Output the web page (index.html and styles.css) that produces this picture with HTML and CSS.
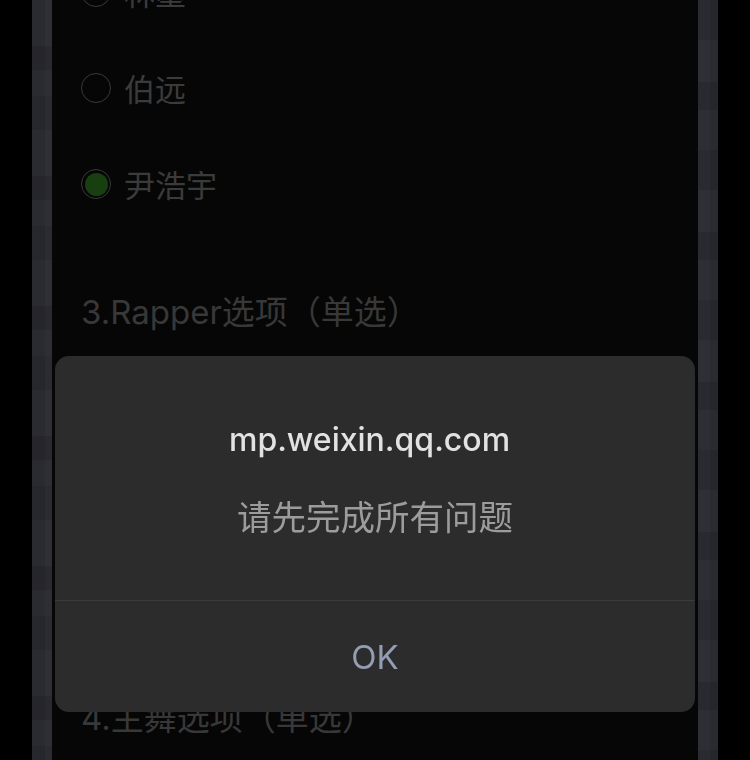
FILE: index.html
```html
<!DOCTYPE html>
<html lang="zh-CN">
<head>
<meta charset="utf-8">
<title>问卷</title>
<link rel="stylesheet" href="styles.css">
</head>
<body>
<div class="screen">
  <div class="strip"></div>
  <main class="page">
    <div class="option"><span class="radio"></span><span class="label">林墨</span></div>
    <div class="option"><span class="radio"></span><span class="label">伯远</span></div>
    <div class="option"><span class="radio checked"></span><span class="label">尹浩宇</span></div>
    <div class="question">3.Rapper选项（单选）</div>
    <div class="option"><span class="radio"></span><span class="label">刘也</span></div>
    <div class="option"><span class="radio"></span><span class="label">赞多</span></div>
    <div class="option"><span class="radio"></span><span class="label">米卡</span></div>
    <div class="question">4.主舞选项（单选）</div>
  </main>
  <div class="strip strip-right"></div>
</div>
<div class="alert">
  <div class="alert-body">
    <div class="alert-title">mp.weixin.qq.com</div>
    <div class="alert-msg">请先完成所有问题</div>
  </div>
  <div class="alert-btn">OK</div>
</div>
</body>
</html>
```
FILE: styles.css
```css
html, body {
  margin: 0;
  padding: 0;
  background: #000;
  height: 760px;
  overflow: hidden;
}
body {
  font-family: "Inter", "Noto Sans CJK SC", sans-serif;
}
.screen {
  display: flex;
  padding: 0 32px;
  height: 760px;
}
.strip {
  width: 20px;
  flex: none;
  background-color: #292930;
  background-image:
    repeating-linear-gradient(180deg, rgba(255,255,255,0.015) 0 46px, rgba(0,0,0,0.06) 46px 70px, rgba(255,255,255,0.01) 70px 96px, rgba(0,0,0,0.03) 96px 130px),
    linear-gradient(90deg, rgba(0,0,0,0.04) 0 13px, rgba(255,255,255,0.015) 13px 20px);
}
.strip-right {
  background-image:
    repeating-linear-gradient(180deg, rgba(0,0,0,0.04) 0 40px, rgba(255,255,255,0.015) 40px 82px, rgba(0,0,0,0.06) 82px 110px, rgba(255,255,255,0.01) 110px 150px),
    linear-gradient(90deg, rgba(255,255,255,0.01) 0 12px, rgba(0,0,0,0.04) 12px 20px);
}
.page {
  flex: 1;
  background: #060606;
  padding-left: 29px;
  margin-top: -56px;
}
.option {
  height: 96px;
  display: flex;
  align-items: center;
  gap: 13px;
}
.radio {
  width: 28px;
  height: 28px;
  border: 1.5px solid #393939;
  border-radius: 50%;
  box-sizing: content-box;
  flex: none;
  display: flex;
  align-items: center;
  justify-content: center;
}
.radio.checked::after {
  content: "";
  width: 23px;
  height: 23px;
  border-radius: 50%;
  background: #173f10;
}
.label {
  font-family: "Noto Sans CJK SC", sans-serif;
  font-size: 31px;
  color: #3b3b3b;
  line-height: 40px;
}
.question {
  margin-top: 60px;
  margin-bottom: 18px;
  font-size: 33px;
  line-height: 40px;
  color: #383838;
  font-family: "Inter", "Noto Sans CJK SC", sans-serif;
}
.alert {
  position: fixed;
  left: 55px;
  top: 356px;
  width: 640px;
  height: 356px;
  background: #2c2c2c;
  border-radius: 14px;
  display: flex;
  flex-direction: column;
  overflow: hidden;
}
.alert-body {
  flex: 1;
  padding: 62px 30px 0;
  text-align: center;
  border-bottom: 1px solid #3b3b3b;
}
.alert-title {
  font-size: 32px;
  line-height: 44px;
  color: #e2e2e2;
  font-weight: 500;
  margin-right: 11px;
}
.alert-msg {
  margin-top: 31px;
  font-family: "Noto Sans CJK SC", sans-serif;
  font-size: 34.5px;
  line-height: 44px;
  color: #9c9c9c;
}
.alert-btn {
  height: 111px;
  display: flex;
  align-items: center;
  justify-content: center;
  font-size: 33px;
  color: #939db4;
}
```
